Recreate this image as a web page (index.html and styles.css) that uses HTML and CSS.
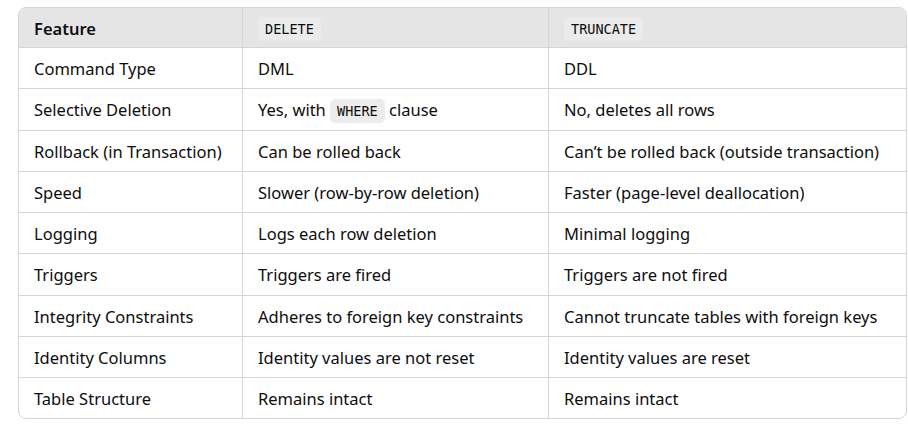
FILE: index.html
```html
<!DOCTYPE html>
<html>
<head>
<meta charset="utf-8">
<link rel="stylesheet" href="styles.css">
</head>
<body>
<div class="wrap">
<table class="cmp">
<thead>
<tr><th>Feature</th><th><code>DELETE</code></th><th><code>TRUNCATE</code></th></tr>
</thead>
<tbody>
<tr><td>Command Type</td><td>DML</td><td>DDL</td></tr>
<tr><td>Selective Deletion</td><td>Yes, with <code>WHERE</code> clause</td><td>No, deletes all rows</td></tr>
<tr><td>Rollback (in Transaction)</td><td>Can be rolled back</td><td>Can’t be rolled back (outside transaction)</td></tr>
<tr><td>Speed</td><td>Slower (row-by-row deletion)</td><td>Faster (page-level deallocation)</td></tr>
<tr><td>Logging</td><td>Logs each row deletion</td><td>Minimal logging</td></tr>
<tr><td>Triggers</td><td>Triggers are fired</td><td>Triggers are not fired</td></tr>
<tr><td>Integrity Constraints</td><td>Adheres to foreign key constraints</td><td>Cannot truncate tables with foreign keys</td></tr>
<tr><td>Identity Columns</td><td>Identity values are not reset</td><td>Identity values are reset</td></tr>
<tr><td>Table Structure</td><td>Remains intact</td><td>Remains intact</td></tr>
</tbody>
</table>
</div>
</body>
</html>
```
FILE: styles.css
```css
html, body { margin: 0; padding: 0; background: #fff; }
body { font-family: "Noto Sans", "Open Sans", sans-serif; color: #0d0d0d; }
.wrap { padding: 7px 0 0 18px; }
.cmp {
  width: 889px;
  border-collapse: separate;
  border-spacing: 0;
  border: 1px solid #d5d5d5;
  border-radius: 8px;
  overflow: hidden;
  font-size: 16.5px;
  table-layout: fixed;
}
.cmp th, .cmp td {
  text-align: left;
  padding: 2px 15px 0;
  height: 38.25px;
  border-bottom: 1px solid #d5d5d5;
  border-left: 1px solid #d5d5d5;
  white-space: nowrap;
  line-height: 22px;
}
.cmp th:first-child, .cmp td:first-child { border-left: none; width: 193px; }
.cmp th:nth-child(2) { width: 275px; }
.cmp tbody tr:last-child td { border-bottom: none; }
.cmp thead th { background: #e5e5e5; font-weight: 600; height: 37px; }
.cmp code {
  font-family: "DejaVu Sans Mono", "Liberation Mono", monospace;
  font-size: 13.5px;
  font-weight: 400;
  background: #ececec;
  border-radius: 5px;
  padding: 4px 7px;
}
.cmp thead code { background: #ebebeb; }
```
